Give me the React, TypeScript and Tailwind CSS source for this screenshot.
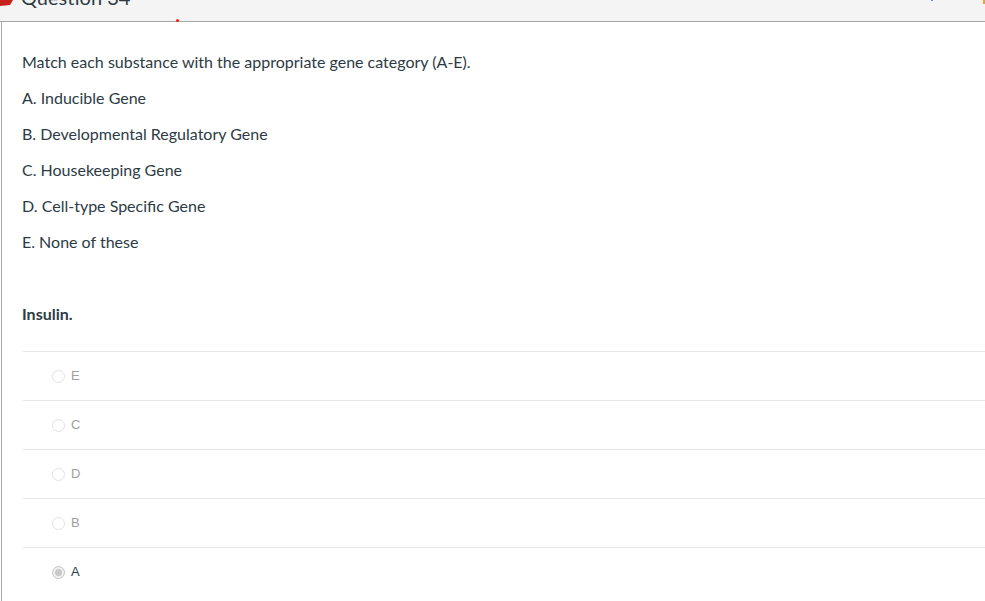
import React from "react";

const options = ["E", "C", "D", "B", "A"];

export default function App() {
  return (
    <div className="w-[985px] h-[601px] overflow-hidden bg-white relative" style={{ fontFamily: "Lato, 'Noto Sans', sans-serif" }}>
      {/* header */}
      <div className="h-[22px] bg-[#f4f4f4] border-b border-[#a6a6a6] overflow-hidden relative">
        <div className="pl-[21px] mt-[-15px] text-[20px] leading-[24px] text-[#2d3b45]">Question 34</div>
        <svg className="absolute left-0 top-0" width="14" height="7" viewBox="0 0 14 7">
          <polygon points="0,0 13,0 10,5 0,6" fill="#c8211c" />
        </svg>
        <div className="absolute right-0 top-0 w-[2px] h-[4px] bg-[#e2a53c]" />
        <div className="absolute left-[931px] top-0 w-[2px] h-[1px] bg-[#6a8bc8]" />
      </div>
      <div className="absolute left-[176px] top-[19px] w-[3px] h-[3px] bg-[#ff1a1a] rounded-full" />
      {/* body */}
      <div className="border-l border-[#a6a6a6] ml-[1px] h-[579px] pl-[20px] pt-[29px] text-[#2d3b45]">
        <div className="flex flex-col gap-[14px] text-[16px] leading-[22px]">
          <p>Match each substance with the appropriate gene category (A-E).</p>
          <p>A. Inducible Gene</p>
          <p>B. Developmental Regulatory Gene</p>
          <p>C. Housekeeping Gene</p>
          <p>D. Cell-type Specific Gene</p>
          <p>E. None of these</p>
        </div>
        <div className="mt-[50px] text-[16px] leading-[22px] font-bold">Insulin.</div>
        <div className="mt-[26px] ml-[1px]">
          {options.map((o) => {
            const sel = o === "A";
            return (
              <div key={o} className="h-[49px] border-t border-[#e6e6e6] flex items-center pl-[29px]">
                <span
                  className={
                    "w-[13px] h-[13px] rounded-full border flex items-center justify-center " +
                    (sel ? "border-[#c4c4c4] bg-[#f0f0f0]" : "border-[#e2e2e2] bg-white")
                  }
                >
                  {sel && <span className="w-[7px] h-[7px] rounded-full bg-[#c8c8c8]" />}
                </span>
                <span
                  className={"ml-[6px] text-[13px] " + (sel ? "text-[#2d3b45]" : "text-[#a0a0a0]")}
                  style={{ fontFamily: "'Liberation Sans', Arial, sans-serif" }}
                >
                  {o}
                </span>
              </div>
            );
          })}
        </div>
      </div>
    </div>
  );
}
